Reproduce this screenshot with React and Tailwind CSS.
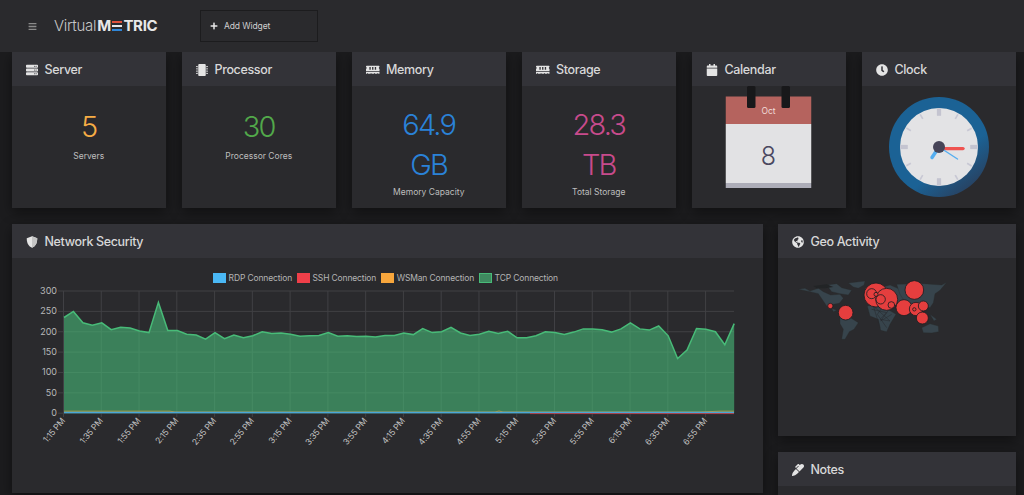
import React from "react";
import { FaServer, FaMicrochip, FaMemory, FaCalendar, FaClock, FaGlobeAmericas, FaMarker, FaPlus, FaBars } from "react-icons/fa";

const tcp = [235,250,222,216,222,205,211,209,202,198,272,203,203,194,192,182,198,183,192,185,190,200,196,197,194,189,190,191,198,189,190,188,189,187,191,191,197,193,208,198,200,211,197,191,194,201,196,201,185,185,190,200,200,198,193,199,207,207,205,199,207,222,207,204,214,190,134,155,208,206,200,168,220].filter((_, i) => i !== 52);
const X = (i) => 64 + i * 9.44;
const Y = (v) => 413.2 - v * 0.4073;
const line = tcp.map((v, i) => `${X(i).toFixed(1)},${Y(v).toFixed(1)}`).join(" ");
const labels = ["1:15","1:35","1:55","2:15","2:35","2:55","3:15","3:35","3:55","4:15","4:35","4:55","5:15","5:35","5:55","6:15","6:35","6:55"];

function Shield() {
  return (
    <svg viewBox="0 0 24 24" className="h-[12px] w-[12px]">
      <path d="M12 0.5 L22.5 4.5 C22.5 13 20 20 12 23.5 C4 20 1.5 13 1.5 4.5 Z" fill="#e4e4e4" />
      <path d="M12 0.5 L22.5 4.5 C22.5 13 20 20 12 23.5 Z" fill="#c4c4c4" />
    </svg>
  );
}

function Card({ icon, title, className = "", bodyClass = "", children }) {
  return (
    <div className={`flex flex-col bg-[#2a2a2d] shadow-[0_4px_12px_rgba(0,0,0,0.45)] ${className}`}>
      <div className="flex h-[34px] shrink-0 items-center gap-[6.5px] bg-[#333338] pl-[14px] pt-[2px] text-[12.5px] font-medium tracking-[-0.35px] text-[#d8d8d8]">
        <span className="flex justify-center text-[12px] text-[#e4e4e4]">{icon}</span>
        <span>{title}</span>
      </div>
      <div className={`flex-1 ${bodyClass}`}>{children}</div>
    </div>
  );
}

function Stat({ icon, title, lines, color, label }) {
  const two = lines.length > 1;
  return (
    <Card icon={icon} title={title} className="h-[156px] w-[153.5px]" bodyClass="flex flex-col items-center">
      <div className={`flex flex-col items-center text-[29px] font-light leading-[40px] tracking-[-1.8px] ${two ? "pt-[19px]" : "pt-[21px]"} ${color}`}>
        {lines.map((l) => <span key={l}>{l}</span>)}
      </div>
      <div className={`text-[8.5px] text-[#bebebe] ${two ? "mt-[1px]" : "mt-[3px]"}`}>{label}</div>
    </Card>
  );
}

function Calendar() {
  return (
    <svg viewBox="0 0 86 102" className="mx-auto block h-[102px] w-[86px] -translate-x-[0.5px]">
      <rect x="0" y="10.5" width="86" height="27.5" fill="#b5635e" />
      <rect x="0" y="38" width="86" height="59" fill="#e2e2e4" />
      <rect x="0" y="97" width="86" height="5" fill="#adadb8" />
      <rect x="21.5" y="0" width="8.5" height="22" rx="1.5" fill="#18181a" />
      <rect x="56" y="0" width="8.5" height="22" rx="1.5" fill="#18181a" />
      <text x="43" y="27.5" textAnchor="middle" fontSize="8.5" fill="#f0dcd8" fontFamily="Inter, sans-serif">Oct</text>
      <text x="43" y="79" textAnchor="middle" fontSize="25" fill="#4a4860" fontFamily="Inter, sans-serif" fontWeight="300">8</text>
    </svg>
  );
}

function Clock() {
  const ticks = Array.from({ length: 12 }, (_, i) => i * 30);
  return (
    <svg viewBox="0 0 100 100" className="mx-auto mt-[11px] block h-[100px] w-[100px]">
      <defs>
        <linearGradient id="ring" x1="0.3" y1="0.3" x2="0.8" y2="0.95">
          <stop offset="0.55" stopColor="#1b6295" />
          <stop offset="1" stopColor="#28405f" />
        </linearGradient>
      </defs>
      <circle cx="50" cy="50" r="50" fill="url(#ring)" />
      <circle cx="50" cy="50" r="39" fill="#e3e3e5" />
      {ticks.map((a) => (
        a % 90 === 0
          ? <rect key={a} x="47.9" y="11.3" width="4.2" height="7.5" transform={`rotate(${a} 50 50)`} fill="#c4c4d0" />
          : <rect key={a} x="49.2" y="12.3" width="1.7" height="5.2" transform={`rotate(${a} 50 50)`} fill="#c8c8d4" />
      ))}
      <line x1="52" y1="51.6" x2="74" y2="51.6" stroke="#ef5350" strokeWidth="3.4" strokeLinecap="round" />
      <line x1="50" y1="50" x2="68.5" y2="62" stroke="#55aef0" strokeWidth="1.4" strokeLinecap="round" />
      <line x1="50" y1="50" x2="43" y2="60.5" stroke="#55aef0" strokeWidth="3.4" strokeLinecap="round" />
      <circle cx="50" cy="50" r="6" fill="#464457" />
    </svg>
  );
}

function Chart() {
  return (
    <svg className="absolute left-0 top-0 h-[495px] w-[1024px]" viewBox="0 0 1024 495" style={{ pointerEvents: "none" }}>
      {[0,50,100,150,200,250,300].map((v) => (
        <g key={v}>
          <line x1="58" x2="734" y1={Y(v)} y2={Y(v)} stroke="#404044" strokeWidth="1" />
          <text x="57" y={Y(v) + 3} textAnchor="end" fontSize="9" fill="#b8b8b8" fontFamily="Inter, sans-serif">{v}</text>
        </g>
      ))}
      {labels.map((l, i) => {
        const x = 63.5 + i * 37.77;
        return (
          <g key={l}>
            <line x1={x} x2={x} y1="291" y2="417" stroke="#404044" strokeWidth="1" />
            <text transform={`translate(${x + 2} 421) rotate(-50)`} textAnchor="end" fontSize="8.5" letterSpacing="-0.2" fill="#c0c0c0" fontFamily="Inter, sans-serif">{l} PM</text>
          </g>
        );
      })}
      <polygon points={`64,413.2 ${line} ${X(71).toFixed(1)},413.2`} fill="rgba(72,187,120,0.6)" />
      <polyline points={line} fill="none" stroke="#48bb78" strokeWidth="1.5" />
      <polyline points="64,411.2 170,411.2 175,412 495,412 499,411 503,412 700,412 720,411.2 734,411.2" fill="none" stroke="#b89a3c" strokeWidth="1" />
      <line x1="64" x2="734" y1="412.5" y2="412.5" stroke="#4aa6d8" strokeWidth="1.4" />
      <line x1="530" x2="734" y1="413.6" y2="413.6" stroke="#c0404a" strokeWidth="0.9" />
    </svg>
  );
}

function WorldMap() {
  const bubbles = [
    [258,72,36],[290,85,33],[167,125,22],[342,110,24],[373,57,28],[378,114,20],[400,105,15],[397,141,18],
    [121,105,8],[245,68,15],[272,85,14],[258,70,6],[304,102,10],[373,115,5],
  ];
  const land = [
    "25,55 45,52 60,60 85,52 100,62 122,72 150,70 160,82 148,97 130,100 120,112 110,105 100,90 85,68 60,62",
    "110,42 140,38 155,50 185,58 175,72 150,68 125,62",
    "175,36 225,30 222,42 205,52 190,48",
    "125,112 140,118 130,122",
    "150,135 178,138 205,155 192,175 178,182 165,205 155,205 160,175 150,158",
    "232,105 270,100 298,118 318,130 300,160 290,182 272,178 265,145 240,135",
    "228,90 235,60 300,42 330,55 350,90 310,98 270,92",
    "320,40 400,38 455,42 470,34 450,58 435,68 430,95 420,110 400,105 370,128 350,100 330,70",
    "420,130 440,145 432,150",
    "395,170 420,158 445,165 446,182 425,186 400,185",
  ];
  const borders = ["245,115 290,125 270,145 300,150 250,105 270,170", "280,105 262,130 290,170", "305,130 272,150 295,118"];
  return (
    <svg viewBox="0 0 510 210" className="ml-[12px] mt-[13px] block h-[70px] w-[170px]">
      {land.map((p) => <polygon key={p} points={p} fill="#37444c" stroke="#26292c" strokeWidth="1" />)}
      {borders.map((p) => <polyline key={p} points={p} fill="none" stroke="#26292c" strokeWidth="1.5" />)}
      <polygon points="70,45 110,40 130,48 105,52 80,52" fill="#222426" />
      {bubbles.map(([x, y, r], i) => <circle key={i} cx={x} cy={y} r={r} fill="#e53e3e" stroke="#1d1d20" strokeWidth="2.5" />)}
    </svg>
  );
}

const legend = [
  ["RDP Connection", "bg-[#4ab8f5]"],
  ["SSH Connection", "bg-[#ef3f49]"],
  ["WSMan Connection", "bg-[#f7a63c]"],
  ["TCP Connection", "bg-[#3f8a60] border border-[#48bb78]"],
];

export default function App() {
  return (
    <div className="relative h-[495px] w-[1024px] overflow-hidden bg-[#1c1c1e]" style={{ fontFamily: "Inter, sans-serif" }}>
      <header className="relative z-10 flex h-[52px] items-center bg-[#2a2a2d]">
        <FaBars className="ml-[28px] text-[9px] text-[#8a8a8a]" />
        <div className="ml-[17px] flex w-[102px] items-center text-[15px] tracking-[-0.3px]">
          <span className="font-light text-[#c8c8c8]">Virtual</span>
          <span className="ml-[1px] font-bold text-[#e8e8e8]">M</span>
          <span className="mx-[1px] flex h-[10.5px] w-[10.5px] shrink-0 flex-col justify-between">
            <span className="h-[2.5px] bg-[#e0503a]" />
            <span className="h-[2.5px] bg-[#e8e8e8]" />
            <span className="h-[2.5px] bg-[#2f86d8]" />
          </span>
          <span className="font-bold text-[#e8e8e8]">TRIC</span>
        </div>
        <button className="ml-[44px] flex h-[32px] w-[118px] items-center border border-[#1c1c1e] pl-[9px] text-[8.5px] tracking-[-0.1px] text-[#d0d0d0]">
          <FaPlus className="mr-[6px] text-[8px] text-[#e8e8e8]" />
          Add Widget
        </button>
      </header>

      <div className="flex gap-[16.5px] pl-[12px]">
        <Stat icon={<FaServer />} title="Server" lines={["5"]} color="text-[#f6ad45]" label="Servers" />
        <Stat icon={<FaMicrochip />} title="Processor" lines={["30"]} color="text-[#52a94a]" label="Processor Cores" />
        <Stat icon={<FaMemory className="text-[13.5px]" />} title="Memory" lines={["64.9", "GB"]} color="text-[#2a82d8]" label="Memory Capacity" />
        <Stat icon={<FaMemory className="text-[13.5px]" />} title="Storage" lines={["28.3", "TB"]} color="text-[#c84b8c]" label="Total Storage" />
        <Card icon={<FaCalendar />} title="Calendar" className="h-[156px] w-[153.5px]"><Calendar /></Card>
        <Card icon={<FaClock />} title="Clock" className="h-[156px] w-[153.5px]"><Clock /></Card>
      </div>

      <div className="mt-[16px] flex gap-[15px] pl-[12px] pr-[8px]">
        <Card icon={<Shield />} title="Network Security" className="h-[269px] w-[751px]">
          <div className="flex justify-center gap-[5px] pt-[14px] pr-[4px] text-[8.5px] tracking-[-0.15px] text-[#b4b4b4]">
            {legend.map(([l, c]) => (
              <span key={l} className="flex items-center gap-[3px]">
                <span className={`h-[10px] w-[12.5px] ${c}`} />
                {l}
              </span>
            ))}
          </div>
        </Card>
        <div className="flex flex-1 flex-col gap-[16px]">
          <Card icon={<FaGlobeAmericas />} title="Geo Activity" className="h-[212px]"><WorldMap /></Card>
          <Card icon={<FaMarker />} title="Notes" className="h-[120px]" />
        </div>
      </div>
      <Chart />
    </div>
  );
}
